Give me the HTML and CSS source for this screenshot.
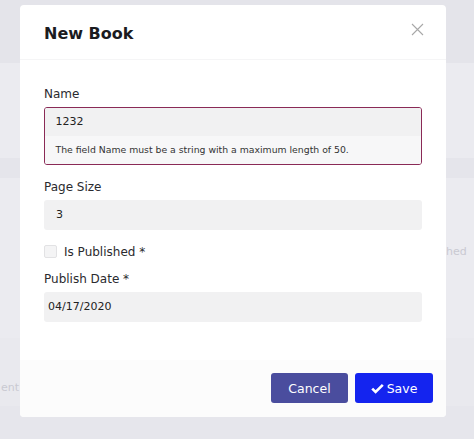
FILE: index.html
```html
<!DOCTYPE html>
<html>
<head>
<meta charset="utf-8">
<link rel="stylesheet" href="styles.css">
</head>
<body>
<div class="page">
  <div class="band band-top"></div>
  <div class="band band-light b1"></div>
  <div class="band band-mid"></div>
  <div class="band band-light b2"><span class="ghost ghost-right">hed</span></div>
  <div class="band band-light b3"><span class="ghost ghost-left">ent</span></div>
  <div class="band band-bottom"></div>
</div>

<div class="modal">
  <div class="modal-header">
    <h2 class="modal-title">New Book</h2>
    <span class="close">
      <svg width="13" height="13" viewBox="0 0 13 13"><path d="M1 1 L12 12 M12 1 L1 12" stroke="#a8a8a8" stroke-width="1.1" fill="none"/></svg>
    </span>
  </div>
  <div class="modal-body">
    <div class="field">
      <label class="label">Name</label>
      <div class="input-group invalid">
        <div class="input-value">1232</div>
        <div class="error">The field Name must be a string with a maximum length of 50.</div>
      </div>
    </div>
    <div class="field">
      <label class="label">Page Size</label>
      <div class="input">3</div>
    </div>
    <div class="check-row">
      <span class="checkbox"></span>
      <span class="check-label">Is Published *</span>
    </div>
    <div class="field">
      <label class="label">Publish Date *</label>
      <div class="input date">04/17/2020</div>
    </div>
  </div>
  <div class="modal-footer">
    <button class="btn btn-cancel">Cancel</button>
    <button class="btn btn-save"><svg width="13" height="11" viewBox="0 0 13 11"><path d="M1.2 5.6 L4.6 9 L11.8 1.8" stroke="#fff" stroke-width="2.6" fill="none" stroke-linejoin="miter"/></svg>Save</button>
  </div>
</div>
</body>
</html>
```
FILE: styles.css
```css
* { box-sizing: border-box; }
html, body { margin: 0; padding: 0; }
body {
  width: 474px;
  height: 439px;
  overflow: hidden;
  background: #e9e9ef;
  font-family: "DejaVu Sans", "Open Sans", sans-serif;
  position: relative;
}
.page { display: flex; flex-direction: column; height: 439px; }
.band { position: relative; }
.band-top { height: 63px; background: #e4e4ea; }
.b1 { height: 95px; background: #ebebf0; }
.band-mid { height: 20px; background: #e5e5eb; }
.b2 { height: 160px; background: #ebebf0; }
.b3 { height: 68px; background: #e9e9ee; }
.band-bottom { flex: 1; background: #e6e6ec; }
.ghost { position: absolute; color: #c9c9d2; font-size: 11px; }
.ghost-right { left: 446px; top: 67px; }
.ghost-left { left: 1px; top: 43px; }

.modal {
  position: absolute;
  left: 20px;
  top: 5px;
  width: 426px;
  height: 412px;
  background: #fff;
  border-radius: 4px;
  display: flex;
  flex-direction: column;
  overflow: hidden;
}
.modal-header {
  height: 55px;
  padding: 0 24px;
  display: flex;
  align-items: center;
  justify-content: space-between;
  border-bottom: 1px solid #f5f5f6;
}
.modal-title {
  margin: 0;
  font-size: 16px;
  font-weight: 700;
  color: #1b1b1f;
  padding-top: 2px;
}
.close { display: flex; margin-right: -2px; margin-top: -5px; }

.modal-body {
  flex: 1;
  padding: 25px 24px 0 24px;
}
.field { display: flex; flex-direction: column; }
.label {
  font-size: 12px;
  color: #2a2a2e;
  height: 18px;
  line-height: 18px;
  margin-bottom: 4px;
}
.input-group {
  border: 1.5px solid #8a2a56;
  border-radius: 3px;
  overflow: hidden;
  height: 58px;
  display: flex;
  flex-direction: column;
}
.input-value {
  height: 28px;
  background: #f1f1f2;
  font-size: 11px;
  color: #222;
  padding-left: 10.5px;
  line-height: 28px;
}
.error {
  flex: 1;
  background: #f7f7f8;
  font-size: 9.3px;
  color: #333;
  padding-left: 10.5px;
  line-height: 27px;
}
.field:nth-child(2) { margin-top: 13px; }
.input {
  height: 30px;
  background: #f1f1f2;
  border-radius: 3px;
  font-size: 11px;
  color: #222;
  padding-left: 12px;
  line-height: 30px;
}
.input.date { padding-left: 4px; }
.check-row {
  display: flex;
  align-items: center;
  margin-top: 15px;
  height: 13px;
}
.checkbox {
  width: 13px;
  height: 13px;
  border: 1px solid #e2e2e4;
  background: #f4f4f5;
  border-radius: 2px;
}
.check-label {
  margin-left: 7px;
  font-size: 12px;
  color: #2a2a2e;
}
.check-row + .field { margin-top: 12px; }

.modal-footer {
  height: 57px;
  background: #fcfcfc;
  display: flex;
  justify-content: flex-end;
  align-items: flex-start;
  gap: 7px;
  padding: 13px 13px 0 0;
}
.btn {
  height: 30px;
  border: none;
  border-radius: 3px;
  color: #fff;
  font-family: "DejaVu Sans", sans-serif;
  font-size: 12.5px;
  display: flex;
  align-items: center;
  justify-content: center;
  gap: 3px;
  padding: 0;
}
.btn-cancel { width: 77px; background: #4a4d9e; }
.btn-save { width: 78px; background: #1424ef; }
```
